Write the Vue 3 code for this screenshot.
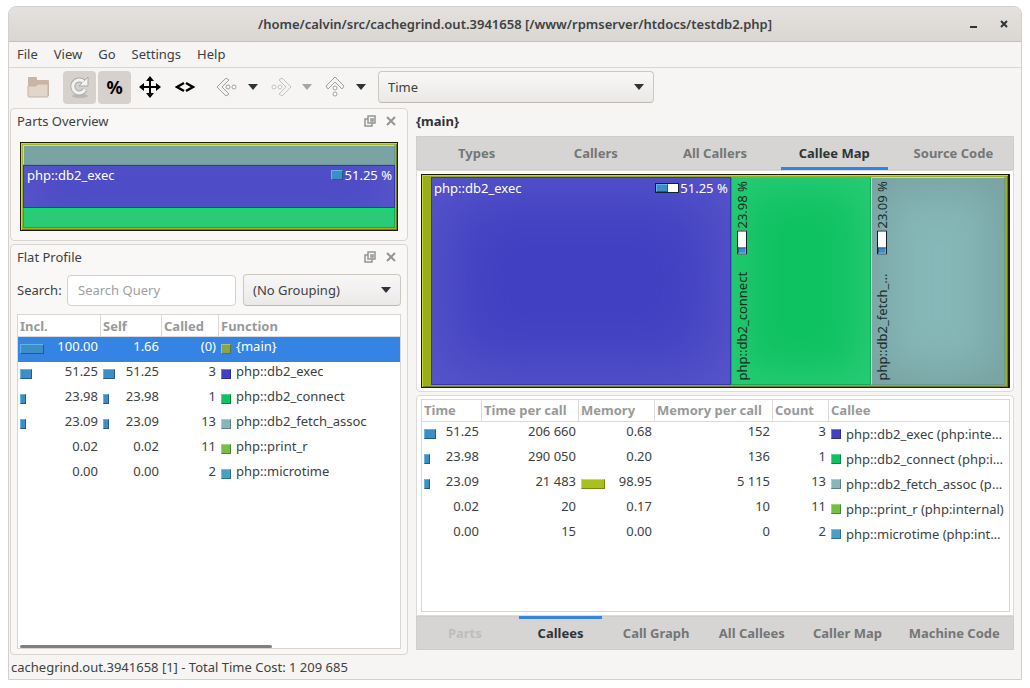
<template>
  <div class="window">
    <!-- 标题栏 -->
    <header class="title-bar">
      <h1>/home/calvin/src/cachegrind.out.3941658 [/www/rpmserver/htdocs/testdb2.php]</h1>
      <div class="window-buttons">
        <button type="button" aria-label="Minimize">
          <svg width="10" height="10" viewBox="0 0 10 10">
            <path d="M1 8h7" stroke="#2e3436" stroke-width="2" />
          </svg>
        </button>
        <button type="button" aria-label="Close">
          <svg width="10" height="10" viewBox="0 0 10 10">
            <path d="M2 2l6 6M8 2l-6 6" stroke="#2e3436" stroke-width="2" />
          </svg>
        </button>
      </div>
    </header>

    <!-- 菜单 -->
    <nav class="menu-bar">
      <button v-for="item in menus" :key="item" type="button">{{ item }}</button>
    </nav>

    <!-- 工具栏 -->
    <div class="tool-bar">
      <button class="tool open" type="button" aria-label="Open">
        <svg width="22" height="22" viewBox="0 0 22 22">
          <path d="M1 20V2q0-1 1-1h7q1 0 1 1v2h11q1 0 1 1v15z" fill="#c8b5a6" />
          <path d="M1 20V10h8l2-2h10v12q0 1-1 1H2q-1 0-1-1z" fill="#e2d5ca" stroke="#c3b2a5" />
        </svg>
      </button>
      <button class="tool pressed" type="button" aria-label="Reload">
        <svg width="22" height="24" viewBox="0 0 22 24">
          <ellipse cx="11" cy="21" rx="8" ry="2" fill="#bdb8b4" />
          <path d="M16 14.500a6.500 6.500 0 1 1-1.500-8" fill="none" stroke="#aaa9a7" stroke-width="5" />
          <path d="M19 2v9h-9z" fill="#f3f3f2" stroke="#aaa9a7" />
          <path d="M16 14.500a6.500 6.500 0 1 1-1.500-8" fill="none" stroke="#f3f3f2" stroke-width="3" />
        </svg>
      </button>
      <button class="tool pressed percent" type="button" aria-label="Relative">%</button>
      <button class="tool" type="button" aria-label="Percentage relative to parent">
        <svg width="22" height="22" viewBox="0 0 22 22">
          <path d="M11 3v16M3 11h16" stroke="#000" stroke-width="2" />
          <path d="M11 0l4 5H7zM11 22l4-5H7zM0 11l5-4v8zM22 11l-5-4v8z" fill="#000" />
        </svg>
      </button>
      <button class="tool" type="button" aria-label="Cycle detection">
        <svg width="20" height="12" viewBox="0 0 20 12">
          <path d="M9 2L2 6l7 4M11 2l7 4-7 4" fill="none" stroke="#000" stroke-width="2.500" />
        </svg>
      </button>
      <div class="history-group">
        <div v-for="arrow in arrows" :key="arrow.name" class="history">
          <button type="button" :aria-label="arrow.name">
            <svg width="22" height="22" viewBox="0 0 22 22" :class="arrow.name">
              <path
                d="M10 2L1 11l9 9 3-2-7-7 7-7z"
                fill="#f4f4f3"
                stroke="#a0a09e"
                stroke-linejoin="round"
              />
              <circle cx="12" cy="11" r="2" fill="#fff" stroke="#a0a09e" />
              <circle cx="18" cy="11" r="2" fill="#fff" stroke="#a0a09e" />
            </svg>
          </button>
          <button type="button" :aria-label="arrow.name + ' history'">
            <svg width="10" height="6" viewBox="0 0 10 6">
              <path d="M0 0h10L5 6z" :fill="arrow.disabled ? '#a5a6a5' : '#2e3436'" />
            </svg>
          </button>
        </div>
      </div>
      <div class="combo event">
        <select v-model="eventType" aria-label="Event type">
          <option>Time</option>
          <option>Memory</option>
        </select>
      </div>
    </div>

    <main class="content">
      <div class="docks">
        <section class="dock">
          <div class="dock-title">
            <h2>Parts Overview</h2>
            <DockButtons />
          </div>
          <div class="parts-map">
            <div class="part fetch"></div>
            <div class="part exec">
              <span>php::db2_exec</span>
              <span class="cost"><i class="bar blue chip"></i>51.25 %</span>
            </div>
            <div class="part connect"></div>
          </div>
        </section>

        <section class="dock profile">
          <div class="dock-title">
            <h2>Flat Profile</h2>
            <DockButtons />
          </div>
          <div class="search-row">
            <label for="search">Search:</label>
            <input id="search" v-model="query" type="text" placeholder="Search Query" />
            <div class="combo grouping">
              <select v-model="grouping" aria-label="Grouping">
                <option>(No Grouping)</option>
                <option>ELF Object</option>
              </select>
            </div>
          </div>
          <div class="list">
            <table>
              <colgroup>
                <col class="incl" />
                <col class="self" />
                <col class="called" />
                <col />
              </colgroup>
              <thead>
                <tr>
                  <th v-for="head in profileHeads" :key="head">{{ head }}</th>
                </tr>
              </thead>
              <tbody>
                <tr
                  v-for="row in filteredRows"
                  :key="row.name"
                  :class="{ selected: row.name === selected }"
                  @click="selected = row.name"
                >
                  <td>
                    <div class="cell">
                      <i v-if="row.incl >= 1" class="bar blue" :style="{ width: barWidth(row.incl) }"></i>
                      <span>{{ row.incl.toFixed(2) }}</span>
                    </div>
                  </td>
                  <td>
                    <div class="cell">
                      <i v-if="row.self >= 5" class="bar blue" :style="{ width: barWidth(row.self) }"></i>
                      <span>{{ row.self.toFixed(2) }}</span>
                    </div>
                  </td>
                  <td class="number">{{ row.called }}</td>
                  <td>
                    <div class="function">
                      <i class="swatch" :style="{ background: row.color }"></i>
                      <span>{{ row.name }}</span>
                    </div>
                  </td>
                </tr>
              </tbody>
            </table>
            <div class="scroll-bar"></div>
          </div>
        </section>
      </div>

      <div class="detail">
        <h2 class="function-name">{main}</h2>
        <div class="tabs top">
          <button
            v-for="tab in topTabs"
            :key="tab"
            type="button"
            :class="{ active: tab === topTab }"
            @click="topTab = tab"
          >
            {{ tab }}
          </button>
        </div>
        <div class="pane map-pane">
          <div class="callee-map">
            <div class="block exec">
              <span>php::db2_exec</span>
              <span class="cost">
                <span class="gauge"><i class="bar blue"></i></span>51.25 %
              </span>
            </div>
            <div class="block vertical connect">
              <div class="rotated">
                <span class="label">php::db2_connect</span>
                <span class="cost">
                  <span class="gauge"><i class="bar blue"></i></span>23.98 %
                </span>
              </div>
            </div>
            <div class="block vertical fetch">
              <div class="rotated">
                <span class="label">php::db2_fetch_assoc</span>
                <span class="cost">
                  <span class="gauge"><i class="bar blue"></i></span>23.09 %
                </span>
              </div>
            </div>
          </div>
        </div>
        <div class="pane list-pane">
          <div class="list">
            <table class="callees">
              <colgroup>
                <col class="time" />
                <col class="time-per-call" />
                <col class="memory" />
                <col class="memory-per-call" />
                <col class="count" />
                <col />
              </colgroup>
              <thead>
                <tr>
                  <th v-for="head in calleeHeads" :key="head">{{ head }}</th>
                </tr>
              </thead>
              <tbody>
                <tr v-for="row in callees" :key="row.name">
                  <td>
                    <div class="cell">
                      <i v-if="row.time >= 1" class="bar blue" :style="{ width: barWidth(row.time) }"></i>
                      <span>{{ row.time.toFixed(2) }}</span>
                    </div>
                  </td>
                  <td class="number">{{ row.timePerCall }}</td>
                  <td>
                    <div class="cell">
                      <i v-if="row.memory >= 1" class="bar olive" :style="{ width: barWidth(row.memory) }"></i>
                      <span>{{ row.memory.toFixed(2) }}</span>
                    </div>
                  </td>
                  <td class="number">{{ row.memoryPerCall }}</td>
                  <td class="number">{{ row.count }}</td>
                  <td>
                    <div class="function">
                      <i class="swatch" :style="{ background: row.color }"></i>
                      <span>{{ row.name }}</span>
                    </div>
                  </td>
                </tr>
              </tbody>
            </table>
          </div>
        </div>
        <div class="tabs bottom">
          <button
            v-for="tab in bottomTabs"
            :key="tab"
            type="button"
            :disabled="tab === 'Parts'"
            :class="{ active: tab === bottomTab }"
            @click="bottomTab = tab"
          >
            {{ tab }}
          </button>
        </div>
      </div>
    </main>

    <!-- 状态栏 -->
    <footer class="status-bar">cachegrind.out.3941658 [1] - Total Time Cost: 1 209 685</footer>
  </div>
</template>

<script setup>
import { computed, h, ref } from "vue";

const menus = ["File", "View", "Go", "Settings", "Help"];
const arrows = [
  { name: "Back", disabled: false },
  { name: "Forward", disabled: true },
  { name: "Up", disabled: false },
];
const profileHeads = ["Incl.", "Self", "Called", "Function"];
const calleeHeads = ["Time", "Time per call", "Memory", "Memory per call", "Count", "Callee"];
const topTabs = ["Types", "Callers", "All Callers", "Callee Map", "Source Code"];
const bottomTabs = ["Parts", "Callees", "Call Graph", "All Callees", "Caller Map", "Machine Code"];

const eventType = ref("Time");
const grouping = ref("(No Grouping)");
const query = ref("");
const selected = ref("{main}");
const topTab = ref("Callee Map");
const bottomTab = ref("Callees");

// 函数列表
const rows = [
  { incl: 100, self: 1.66, called: "(0)", name: "{main}", color: "#86a64c" },
  { incl: 51.25, self: 51.25, called: "3", name: "php::db2_exec", color: "#4240c2" },
  { incl: 23.98, self: 23.98, called: "1", name: "php::db2_connect", color: "#0fc261" },
  { incl: 23.09, self: 23.09, called: "13", name: "php::db2_fetch_assoc", color: "#86b8b8" },
  { incl: 0.02, self: 0.02, called: "11", name: "php::print_r", color: "#73c044" },
  { incl: 0, self: 0, called: "2", name: "php::microtime", color: "#48a0c4" },
];

// 被调用函数
const callees = [
  { time: 51.25, timePerCall: "206 660", memory: 0.68, memoryPerCall: "152", count: 3, name: "php::db2_exec (php:internal)", color: "#4240c2" },
  { time: 23.98, timePerCall: "290 050", memory: 0.2, memoryPerCall: "136", count: 1, name: "php::db2_connect (php:internal)", color: "#0fc261" },
  { time: 23.09, timePerCall: "21 483", memory: 98.95, memoryPerCall: "5 115", count: 13, name: "php::db2_fetch_assoc (php:internal)", color: "#86b8b8" },
  { time: 0.02, timePerCall: "20", memory: 0.17, memoryPerCall: "10", count: 11, name: "php::print_r (php:internal)", color: "#73c044" },
  { time: 0, timePerCall: "15", memory: 0, memoryPerCall: "0", count: 2, name: "php::microtime (php:internal)", color: "#48a0c4" },
];

const filteredRows = computed(() => rows.filter((row) => row.name.includes(query.value)));

// 百分比 -> 小条宽度
const barWidth = (value) => `${Math.round(value * 0.24)}px`;

// 面板右上角的浮动/关闭按钮
const DockButtons = () =>
  h("div", { class: "dock-buttons" }, [
    h("button", { type: "button", "aria-label": "Float" }, [
      h("svg", { width: 12, height: 12, viewBox: "0 0 12 12" }, [
        h("path", {
          d: "M4 1h7v7H4zM8 8v3H1V4h3M6 4h3v2H6",
          fill: "none",
          stroke: "#929595",
          "stroke-width": 1.5,
        }),
      ]),
    ]),
    h("button", { type: "button", "aria-label": "Close" }, [
      h("svg", { width: 10, height: 10, viewBox: "0 0 10 10" }, [
        h("path", { d: "M1 1l8 8M9 1L1 9", stroke: "#929595", "stroke-width": 2 }),
      ]),
    ]),
  ]);
</script>

<style>
body {
  background: #fff;
}
.dock-buttons {
  display: flex;
  align-items: center;
  gap: 10px;
}
.dock-buttons button {
  display: flex;
  padding: 0;
  border: 0;
  background: none;
}
</style>

<style scoped>
* {
  box-sizing: border-box;
}
.window {
  display: flex;
  flex-direction: column;
  min-height: calc(100vh - 14px);
  margin: 6px 8px 8px;
  overflow: hidden;
  border: 1px solid #d2d0ce;
  border-radius: 8px 8px 0 0;
  background: #f6f5f4;
  color: #3c4143;
  font: 13px/20px "Noto Sans", "Noto Sans CJK SC", sans-serif;
}
button,
input,
select {
  margin: 0;
  color: inherit;
  font: inherit;
}
button {
  padding: 0;
  border: 0;
  background: none;
}
svg {
  display: block;
}
h1,
h2 {
  margin: 0;
  font-size: 13px;
  font-weight: normal;
}

/* 标题栏 */
.title-bar {
  display: flex;
  align-items: center;
  height: 35px;
  border-bottom: 1px solid #c5c0bb;
  background: linear-gradient(#e4e1de, #dad6d2);
}
.title-bar h1 {
  flex: 1;
  padding-left: 52px;
  text-align: center;
  font-weight: 600;
}
.window-buttons {
  display: flex;
  gap: 20px;
  padding-right: 12px;
}

/* 菜单 */
.menu-bar {
  display: flex;
  gap: 16px;
  height: 26px;
  padding: 0 8px 1px;
  border-bottom: 1px solid #d9d7d5;
}

/* 工具栏 */
.tool-bar {
  display: flex;
  align-items: center;
  height: 40px;
  padding: 0 12px 2px;
}
.tool {
  display: flex;
  align-items: center;
  justify-content: center;
  width: 33px;
  height: 33px;
  margin-right: 2px;
  border-radius: 4px;
}
.tool.open {
  margin-right: 9px;
}
.tool.pressed {
  background: #d6d1cd;
}
.tool.percent {
  color: #000;
  font-size: 18px;
  font-weight: bold;
}
.history-group {
  display: flex;
  gap: 12px;
  margin-left: 13px;
}
.history {
  display: flex;
  align-items: center;
  gap: 10px;
}
.history svg.Forward {
  transform: rotate(180deg);
  opacity: 0.6;
}
.history svg.Up {
  transform: rotate(90deg);
}
.combo {
  position: relative;
}
.combo::after {
  position: absolute;
  top: 13px;
  right: 10px;
  border: 5px solid transparent;
  border-top: 6px solid #2e3436;
  border-bottom: 0;
  content: "";
  pointer-events: none;
}
.combo select {
  display: block;
  width: 100%;
  height: 32px;
  padding: 0 9px;
  border: 1px solid #cdc7c2;
  border-bottom-color: #bfb8b1;
  border-radius: 4px;
  appearance: none;
  background: linear-gradient(#f8f7f7, #ebe9e8);
}
.combo.event {
  width: 276px;
  margin-left: 12px;
}

/* 主体 */
.content {
  display: flex;
  flex: 1;
  gap: 8px;
  padding: 0 7px 0 1px;
}
.docks {
  display: flex;
  flex: 0 0 398px;
  flex-direction: column;
  gap: 3px;
  min-width: 0;
}
.dock {
  padding: 0 6px;
  border: 1px solid #d8d5d2;
  border-radius: 4px;
  background: #f9f8f7;
}
.dock.profile {
  display: flex;
  flex: 1;
  flex-direction: column;
  padding-bottom: 5px;
}
.dock-title {
  display: flex;
  align-items: center;
  justify-content: space-between;
  height: 24px;
  padding: 0 5px 1px 0;
}
.parts-map {
  display: flex;
  flex-direction: column;
  height: 89px;
  margin: 9px 3px;
  padding: 2px;
  border: 1px solid #1c1c08;
  background: #a4b51c;
  box-shadow: inset 1px 1px #c6da2e, inset -1px -1px #6f7c10;
}
.exec {
  border: 1px solid #3635b4;
  background: #4240c2;
  box-shadow: inset 0 0 46px 6px #5a58ca;
  color: #fff;
}
.connect {
  border: 1px solid #12a858;
  border-top-color: #08e070;
  background: #0fc261;
  box-shadow: inset 0 0 40px 12px #2acb76;
  color: #1c2b24;
}
.fetch {
  border: 1px solid #6c9797;
  border-top-color: #b1dcdc;
  border-left-color: #b1dcdc;
  background: #86b8b8;
  box-shadow: inset 0 0 40px 16px #7aa3a3;
  color: #1c2b2b;
}
.part {
  flex: 19;
}
.part.exec {
  display: flex;
  flex: 43;
  align-items: flex-start;
  justify-content: space-between;
  padding: 0 2px 0 3px;
  line-height: 18px;
}
.cost {
  display: flex;
  align-items: center;
}
.bar {
  display: block;
  height: 10px;
  border: 1px solid;
}
.bar.blue {
  border-color: #65b2e4 #245a84 #245a84 #65b2e4;
  background: #3d8dc6;
}
.bar.olive {
  border-color: #c8dc48 #788812 #788812 #c8dc48;
  background: #a9c11c;
}
.bar.chip {
  width: 12px;
  margin-right: 2px;
}

.search-row {
  display: flex;
  align-items: center;
  height: 44px;
  padding-bottom: 2px;
}
.search-row label {
  width: 50px;
}
.search-row input {
  flex: 1;
  min-width: 0;
  height: 31px;
  margin-right: 7px;
  padding: 0 10px;
  border: 1px solid #d5d0cc;
  border-radius: 4px;
  background: #fff;
}
.search-row input::placeholder {
  color: #9da0a0;
}
.combo.grouping {
  width: 158px;
}

/* 表格 */
.list {
  flex: 1;
  min-width: 0;
  border: 1px solid #d9d5d2;
  background: #fff;
}
.profile .list {
  display: flex;
  flex-direction: column;
  justify-content: space-between;
  margin-top: 1px;
}
.scroll-bar {
  width: 66%;
  height: 3px;
  margin-left: 2px;
  border-radius: 2px;
  background: #7f8181;
}
table {
  width: 100%;
  border-collapse: separate;
  border-spacing: 0;
  table-layout: fixed;
}
.incl {
  width: 83px;
}
.self {
  width: 61px;
}
.called {
  width: 57px;
}
.time {
  width: 60px;
}
.time-per-call {
  width: 97px;
}
.memory {
  width: 76px;
}
.memory-per-call {
  width: 118px;
}
.count {
  width: 56px;
}
th {
  height: 22px;
  padding: 0 2px;
  border-right: 1px solid #dcdad8;
  border-bottom: 1px solid #dcdad8;
  color: #989a9a;
  text-align: left;
  line-height: 20px;
  white-space: nowrap;
}
th:last-child {
  border-right: 0;
}
td {
  height: 25px;
  padding: 0 3px 0 2px;
  line-height: 18px;
  vertical-align: top;
}
.cell {
  display: flex;
}
.cell .bar {
  margin-top: 7px;
}
.cell span {
  margin-left: auto;
}
.number {
  text-align: right;
}
.function {
  display: flex;
}
.function span {
  overflow: hidden;
  text-overflow: ellipsis;
  white-space: nowrap;
}
.swatch {
  flex: none;
  width: 10px;
  height: 10px;
  margin: 7px 5px 0 0;
  border: 1px solid;
  border-color: rgba(255, 255, 255, 0.3) rgba(0, 0, 0, 0.3) rgba(0, 0, 0, 0.3)
    rgba(255, 255, 255, 0.3);
}
.selected td {
  background: #3584e4;
  color: #fff;
}
.callees .function span {
  padding-top: 3px;
}

/* 右侧详情 */
.detail {
  display: flex;
  flex: 1;
  flex-direction: column;
  min-width: 0;
  padding-bottom: 5px;
}
.function-name {
  height: 28px;
  line-height: 26px;
  color: #2e3436;
  font-weight: bold;
}
.tabs {
  display: flex;
  height: 34px;
  border: 1px solid #d0cecb;
  background: #d6d5d3;
}
.tabs button {
  position: relative;
  flex: 1;
  color: #747677;
  font-weight: bold;
}
.tabs.bottom button:last-child {
  flex-grow: 1.23;
}
.tabs .active {
  color: #2e3436;
}
.tabs .active::after {
  position: absolute;
  right: 6px;
  bottom: -1px;
  left: 6px;
  height: 3px;
  background: #3584e4;
  content: "";
}
.tabs.bottom .active::after {
  top: -1px;
  bottom: auto;
}
.tabs button:disabled {
  color: #bdbdbb;
}
.pane {
  display: flex;
  flex: 1;
  padding: 3px 3px 3px 4px;
  border: 1px solid #dddad8;
  border-radius: 0 0 4px 4px;
  background: #fff;
}
.map-pane {
  margin-bottom: 3px;
}
.list-pane {
  border-radius: 4px 4px 0 0;
}
.callee-map {
  display: flex;
  flex: 1;
  min-height: 213px;
  padding: 2px 3px 2px 9px;
  border: 1px solid #1c1c08;
  border-right-width: 2px;
  background: #9aad1a;
  box-shadow: inset 1px 1px #c6da2e, inset -1px -1px #6f7c10;
}
.block {
  min-width: 0;
}
.block.exec {
  display: flex;
  flex: 300;
  align-items: flex-start;
  justify-content: space-between;
  padding: 0 2px;
  box-shadow: inset 0 0 70px 10px #5a58ca;
}
.block.connect {
  flex: 141;
}
.block.fetch {
  flex: 135;
}
.gauge {
  width: 24px;
  height: 10px;
  margin-right: 1px;
  border: 1px solid #10222e;
  background: #fff;
}
.gauge .bar {
  width: 12px;
  height: 8px;
}
.vertical {
  display: flex;
  padding: 3px 0;
}
.rotated {
  display: flex;
  justify-content: space-between;
  writing-mode: vertical-rl;
  transform: rotate(180deg);
}
.rotated .label {
  max-height: 114px;
  overflow: hidden;
  text-overflow: ellipsis;
  white-space: nowrap;
}
.rotated .gauge {
  width: 10px;
  height: 24px;
  margin: 0 0 2px;
}
.rotated .bar {
  width: 8px;
  height: 6px;
}

/* 状态栏 */
.status-bar {
  height: 24px;
  padding-left: 2px;
  line-height: 25px;
}
</style>
